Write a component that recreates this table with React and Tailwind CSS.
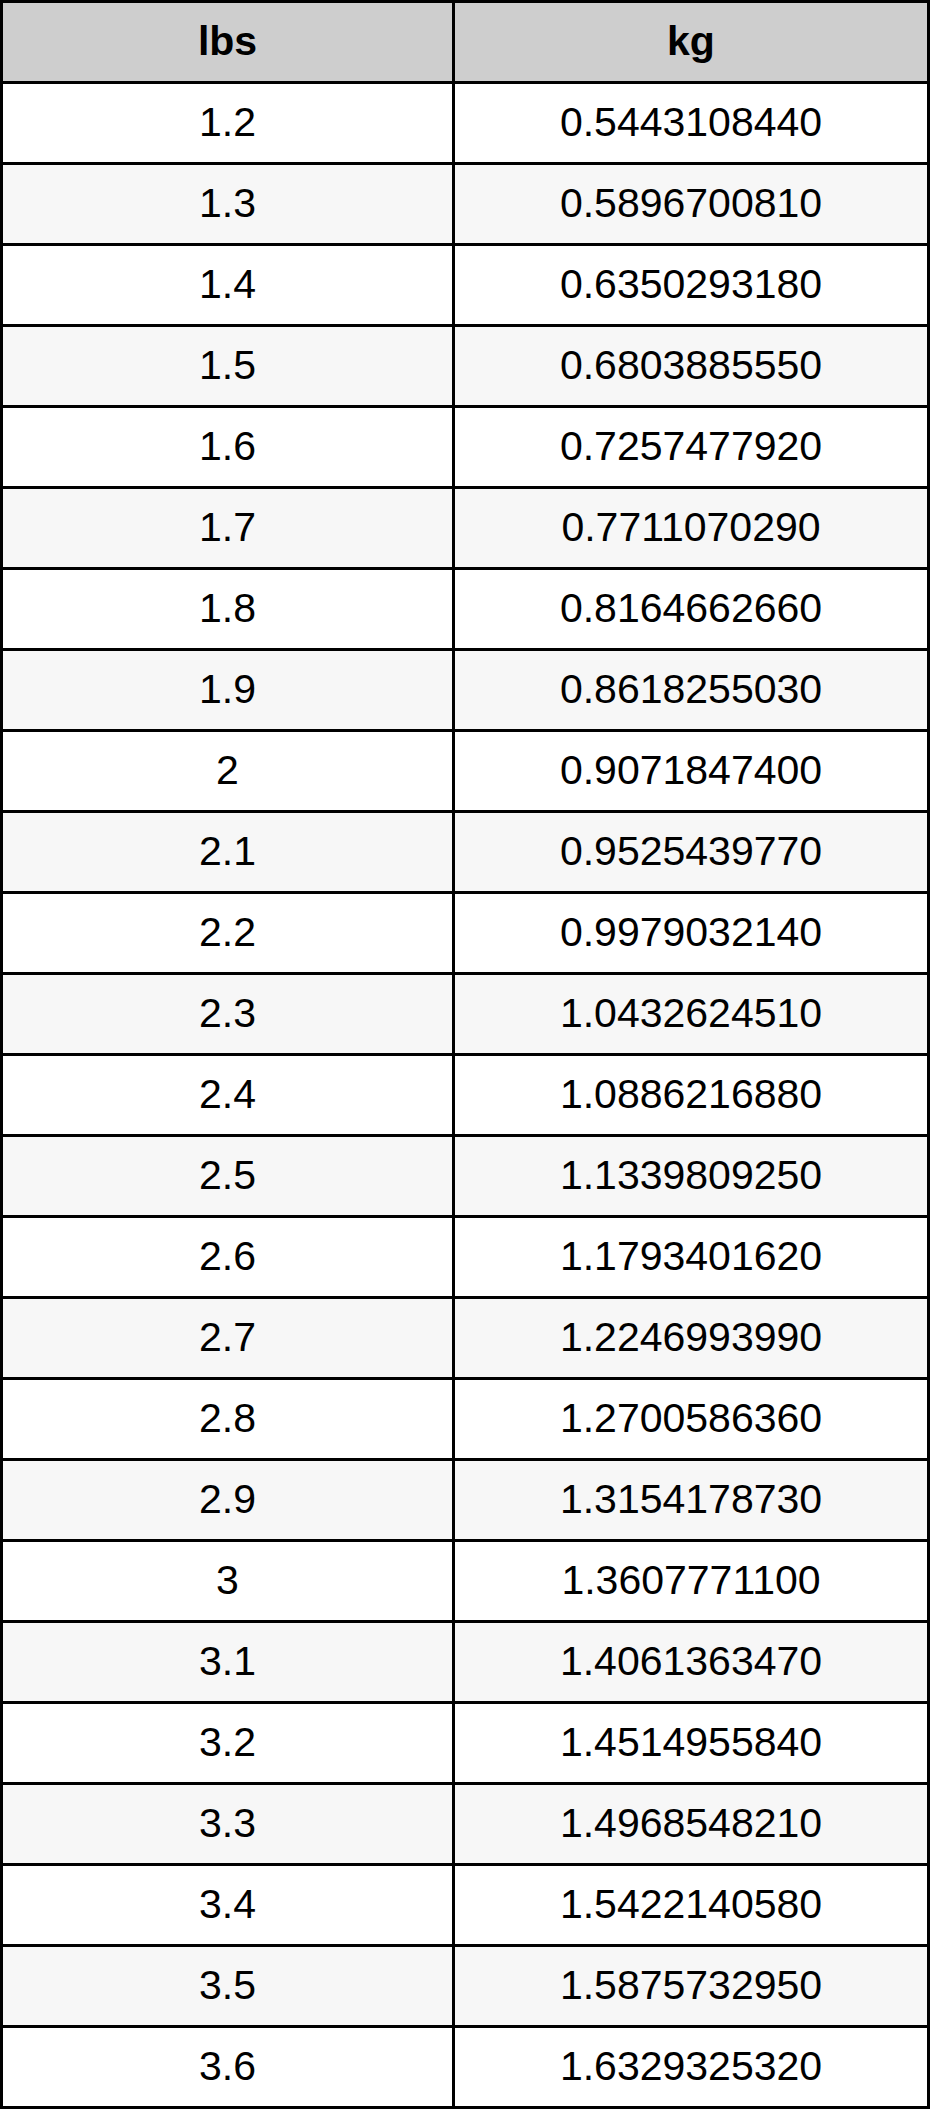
const ROWS = [
	["1.2", "0.5443108440"],
	["1.3", "0.5896700810"],
	["1.4", "0.6350293180"],
	["1.5", "0.6803885550"],
	["1.6", "0.7257477920"],
	["1.7", "0.7711070290"],
	["1.8", "0.8164662660"],
	["1.9", "0.8618255030"],
	["2", "0.9071847400"],
	["2.1", "0.9525439770"],
	["2.2", "0.9979032140"],
	["2.3", "1.0432624510"],
	["2.4", "1.0886216880"],
	["2.5", "1.1339809250"],
	["2.6", "1.1793401620"],
	["2.7", "1.2246993990"],
	["2.8", "1.2700586360"],
	["2.9", "1.3154178730"],
	["3", "1.3607771100"],
	["3.1", "1.4061363470"],
	["3.2", "1.4514955840"],
	["3.3", "1.4968548210"],
	["3.4", "1.5422140580"],
	["3.5", "1.5875732950"],
	["3.6", "1.6329325320"],
];

const App = () => {
	return (
		<div className="w-[930px] bg-white font-['Liberation_Sans',Arial,sans-serif] text-black">
			{/* CONVERSION TABLE */}
			<table className="border-separate border-spacing-[3px] bg-black">
				<thead>
					<tr>
						<th className="w-[449px] h-[78px] p-0 bg-[#cecece] text-[41px] font-bold text-center align-middle">
							lbs
						</th>
						<th className="w-[472px] h-[78px] p-0 bg-[#cecece] text-[41px] font-bold text-center align-middle">
							kg
						</th>
					</tr>
				</thead>
				<tbody>
					{ROWS.map(([lbs, kg], index) => (
						<tr key={lbs}>
							<td
								className={`w-[449px] h-[78px] p-0 text-[41px] text-center align-middle ${
									index % 2 === 0 ? "bg-white" : "bg-[#f7f7f7]"
								}`}>
								{lbs}
							</td>
							<td
								className={`w-[472px] h-[78px] p-0 text-[41px] text-center align-middle ${
									index % 2 === 0 ? "bg-white" : "bg-[#f7f7f7]"
								}`}>
								{kg}
							</td>
						</tr>
					))}
				</tbody>
			</table>
		</div>
	);
};

export default App;
